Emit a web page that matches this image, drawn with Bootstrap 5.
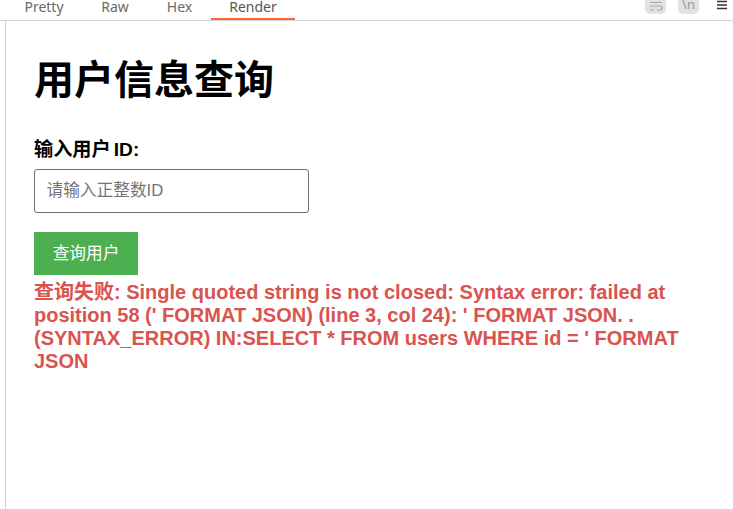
<!DOCTYPE html>
<html lang="zh">
<head>
<meta charset="utf-8">
<title>用户信息查询</title>
<link href="https://cdn.jsdelivr.net/npm/bootstrap@5.3.0/dist/css/bootstrap.min.css" rel="stylesheet">
<style>
html,body{height:100%;overflow:hidden;background:#fff}
body{font-family:"Liberation Sans","Noto Sans CJK SC",sans-serif;color:#000}
.topbar{height:21px;border-bottom:1px solid #d4d4d4;padding-left:6px}
.tabitem{font-family:"Noto Sans",sans-serif;font-size:14px;line-height:13px;color:#6a6a6a;height:20px;text-align:center}
.tab-a{width:76px}.tab-b{width:66px}.tab-c{width:63px}
.tab-d{width:84px;color:#555;border-bottom:2px solid #ff6633}
.tool-btn{width:21px;height:14px;background:#e2e2e2;border-radius:0 0 5px 5px;color:#999}
.tool-gap{padding-right:5px}
.tool-next{margin-left:12px}
.tool-menu{margin-left:17px}
.tool-txt{font-family:"Noto Sans",sans-serif;font-size:13px;line-height:9px}
.pagewrap{border-left:1px solid #d0d0d0;margin-left:5px;height:488px;padding:34px 28px 0}
.pg-title{font-size:40px;font-weight:700;line-height:50px;margin:0 0 34px}
.pg-label{font-size:19.2px;font-weight:700;line-height:22px;margin-bottom:8px;display:block}
.pg-label-id{padding-left:3px}
.pg-input{width:275px;height:44px;border:1px solid #707070;border-radius:3px;font-size:16.7px;padding:0 12px 0 11.5px;margin-bottom:19px;display:block}
.pg-input::placeholder{color:#757575;opacity:1}
.pg-btn{width:104px;height:43px;background:#4caf50;color:#fff;font-size:16.7px;border:0;border-radius:0;padding:1px 0 0;display:block}
.pg-err{font-size:20px;font-weight:700;line-height:23px;color:#d9534f;width:660px;margin-top:6px}
</style>
</head>
<body>
<div class="topbar d-flex justify-content-between">
  <div class="d-flex">
    <div class="tabitem tab-a">Pretty</div>
    <div class="tabitem tab-b">Raw</div>
    <div class="tabitem tab-c">Hex</div>
    <div class="tabitem tab-d">Render</div>
  </div>
  <div class="d-flex align-items-start tool-gap">
    <div class="tool-btn d-flex justify-content-center"><svg width="14" height="12" viewBox="0 0 14 12" fill="none" stroke="#a5a5a5" stroke-width="1.2"><path d="M1 2.5h12M1 6h10a2 2 0 0 1 0 4H8M1 10h4"/></svg></div>
    <div class="tool-btn text-center tool-txt tool-next">\n</div>
    <svg class="tool-menu" width="12" height="12" viewBox="0 0 12 12" stroke="#333" stroke-width="1.3"><path d="M1 1.5h10M1 5h10M1 8.5h10"/></svg>
  </div>
</div>
<div class="pagewrap">
  <h1 class="pg-title">用户信息查询</h1>
  <label class="pg-label" for="uid">输入用户<span class="pg-label-id">ID:</span></label>
  <input id="uid" class="pg-input" type="text" placeholder="请输入正整数ID">
  <button class="pg-btn" type="button">查询用户</button>
  <div class="pg-err">查询失败: Single quoted string is not closed: Syntax error: failed at position 58 (' FORMAT JSON) (line 3, col 24): ' FORMAT JSON. . (SYNTAX_ERROR) IN:SELECT * FROM users WHERE id = ' FORMAT JSON</div>
</div>
<script src="https://cdn.jsdelivr.net/npm/bootstrap@5.3.0/dist/js/bootstrap.bundle.min.js"></script>
</body>
</html>
